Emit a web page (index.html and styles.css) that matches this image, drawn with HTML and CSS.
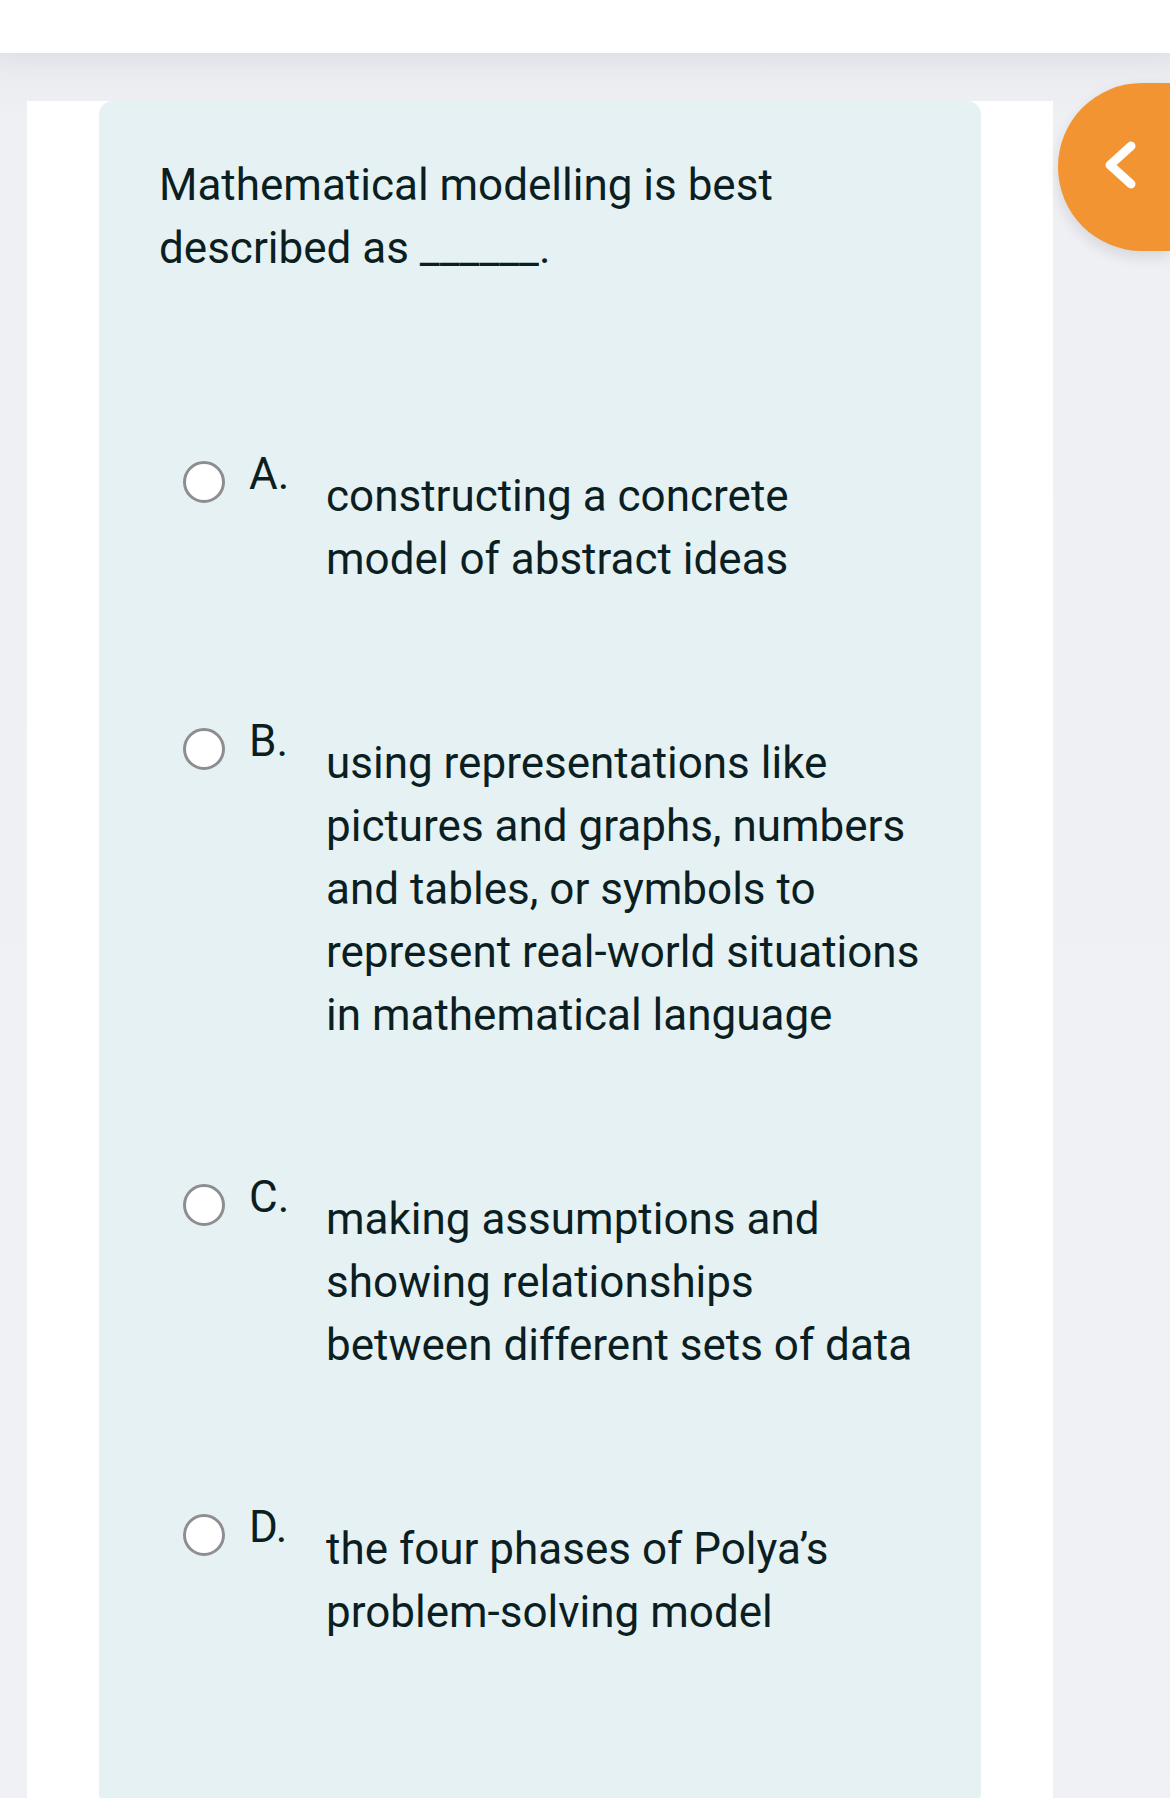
FILE: index.html
```html
<!DOCTYPE html>
<html lang="en">
<head>
<meta charset="utf-8">
<title>Question</title>
<link rel="stylesheet" href="styles.css">
</head>
<body>
<header class="topbar"></header>
<main class="stage">
  <section class="panel">
    <div class="card">
      <p class="question">Mathematical modelling is best<br>described as ______.</p>
      <ul class="options">
        <li class="option">
          <span class="radio"></span>
          <span class="letter">A.</span>
          <span class="answer">constructing a concrete<br>model of abstract ideas</span>
        </li>
        <li class="option">
          <span class="radio"></span>
          <span class="letter">B.</span>
          <span class="answer">using representations like<br>pictures and graphs, numbers<br>and tables, or symbols to<br>represent real-world situations<br>in mathematical language</span>
        </li>
        <li class="option">
          <span class="radio"></span>
          <span class="letter">C.</span>
          <span class="answer">making assumptions and<br>showing relationships<br>between different sets of data</span>
        </li>
        <li class="option">
          <span class="radio"></span>
          <span class="letter">D.</span>
          <span class="answer">the four phases of Polya’s<br>problem-solving model</span>
        </li>
      </ul>
    </div>
  </section>
  <button class="back" type="button" aria-label="Back">
    <svg class="back-icon" width="112" height="168" viewBox="0 0 112 168">
      <path d="M73 63 L52 82 L73 101" fill="none" stroke="#ffffff" stroke-width="9" stroke-linecap="round" stroke-linejoin="round"/>
    </svg>
  </button>
</main>
</body>
</html>
```

FILE: styles.css
```css
html, body {
  margin: 0;
  padding: 0;
  overflow: hidden;
}

body {
  background: #f0f1f5;
  font-family: Roboto, "Noto Sans", sans-serif;
  color: #0b1e22;
}

.topbar {
  height: 53px;
  background: #ffffff;
  position: relative;
  z-index: 2;
  box-shadow: 0 4px 24px rgba(40, 44, 60, 0.06);
}

.stage {
  position: relative;
  padding: 48px 0 0 27px;
  background: linear-gradient(#e8e9ee, #eff0f4 60px, #f0f1f5);
}

.panel {
  width: 1026px;
  box-sizing: border-box;
  padding: 0 72px;
  background: #ffffff;
}

.card {
  width: 882px;
  box-sizing: border-box;
  padding: 53px 41px 163px 60px;
  background: #e6f1f3;
  border-radius: 14px;
}

.question {
  margin: 0;
  font-size: 44px;
  line-height: 63px;
}

.options {
  list-style: none;
  margin: 163px 0 0;
  padding: 0 0 0 24px;
  display: flex;
  flex-direction: column;
  gap: 119px;
}

.option {
  display: flex;
  align-items: flex-start;
  font-size: 44px;
  line-height: 63px;
}

.radio {
  flex: 0 0 auto;
  width: 42px;
  height: 42px;
  box-sizing: border-box;
  margin-top: 18px;
  border: 3px solid #8e8d92;
  border-radius: 50%;
  background: #ffffff;
}

.letter {
  flex: 0 0 auto;
  width: 77px;
  margin-left: 24px;
}

.answer {
  padding-top: 22px;
  white-space: nowrap;
}

.back {
  position: absolute;
  top: 30px;
  left: 1058px;
  width: 112px;
  height: 168px;
  padding: 0;
  border: none;
  border-radius: 84px 0 0 84px;
  background: #f39433;
  box-shadow: 0 6px 14px rgba(30, 30, 50, 0.12);
}

.back-icon {
  display: block;
}
```
